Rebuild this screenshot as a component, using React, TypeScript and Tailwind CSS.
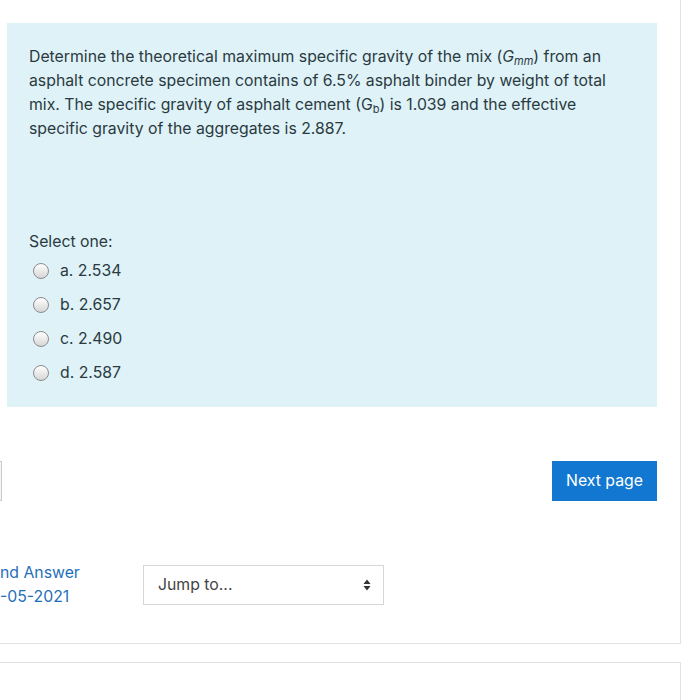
import { useState } from 'react'

const options = ['a. 2.534', 'b. 2.657', 'c. 2.490', 'd. 2.587']

const Radio = ({ checked }: { checked: boolean }) => (
  <span className="flex h-[16px] w-[16px] items-center justify-center rounded-full border border-[#8c8c8c] bg-linear-to-b from-white to-[#d6d6d6]">
    {checked && <span className="h-[6px] w-[6px] rounded-full bg-[#333]" />}
  </span>
)

const SortArrows = () => (
  <svg width="8" height="12" viewBox="0 0 8 12" fill="#333">
    <path d="M4 0.5 L7.5 5 L0.5 5 Z" />
    <path d="M4 11.5 L7.5 7 L0.5 7 Z" />
  </svg>
)

const App = () => {
  const [answer, setAnswer] = useState<number | null>(null)

  return (
    <div className="h-[700px] w-[698px] overflow-hidden bg-white font-['Inter',sans-serif] text-[15.8px] text-[#2b3a3f]">
      <div className="h-[644px] w-[681px] border-r border-b border-[#e3e3e3] pt-[23px] pl-[7px]">
        <div className="w-[650px] bg-[#def2f8] px-[22px] pt-[22px] pb-[17px] leading-[24px]">
          <p className="whitespace-nowrap">
            Determine the theoretical maximum specific gravity of the mix (
            <i>G</i>
            <sub className="text-[11px] italic">mm</sub>) from an
            <br />
            asphalt concrete specimen contains of 6.5% asphalt binder by weight
            of total
            <br />
            mix. The specific gravity of asphalt cement (G
            <sub className="text-[11px]">b</sub>) is 1.039 and the effective
            <br />
            specific gravity of the aggregates is 2.887.
          </p>
          <div className="mt-[89px]">Select one:</div>
          <div className="flex flex-col">
            {options.map((opt, i) => (
              <label
                key={opt}
                className="flex h-[34px] cursor-pointer items-center gap-[11px] pl-[4px]"
                onClick={() => setAnswer(i)}
              >
                <Radio checked={answer === i} />
                <span>{opt}</span>
              </label>
            ))}
          </div>
        </div>

        <div className="mt-[54px] flex w-[650px] items-center justify-between">
          <button className="ml-[-105px] h-[40px] w-[100px] border border-[#ccc] bg-[#f5f5f5]" />
          <button className="h-[40px] w-[105px] bg-[#1177d1] text-white">
            Next page
          </button>
        </div>

        <div className="mt-[60px] ml-[-7px] flex items-center">
          <a className="w-[77px] whitespace-nowrap leading-[24px] text-[#1f6fb8]">
            <div>nd Answer</div>
            <div>-05-2021</div>
          </a>
          <div className="ml-[66px] flex h-[40px] w-[241px] items-center justify-between border border-[#d6d6d6] pr-[12px] pl-[14px] text-[#444]">
            <span>Jump to...</span>
            <SortArrows />
          </div>
        </div>
      </div>
      <div className="mt-[18px] h-[60px] w-[681px] border-t border-r border-[#e3e3e3]" />
    </div>
  )
}

export default App
